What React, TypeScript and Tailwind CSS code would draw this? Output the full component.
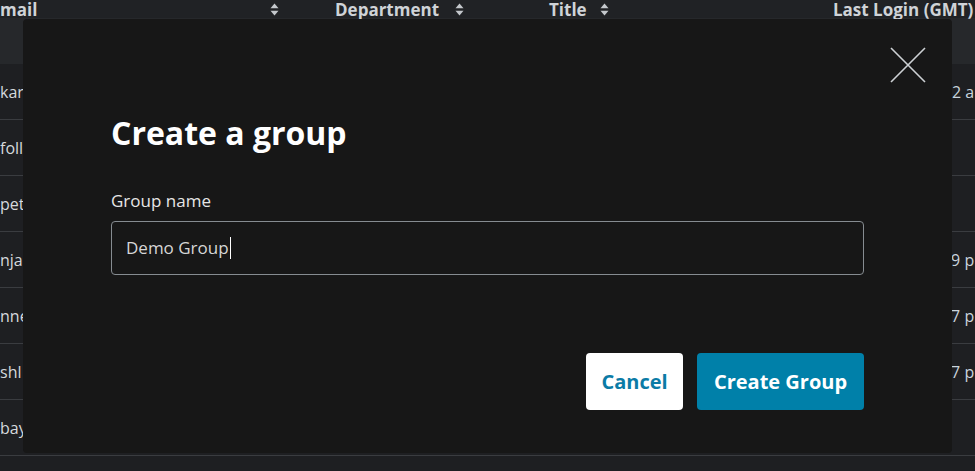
import React from "react";

const rows = [
  { left: "kar", right: "12 am" },
  { left: "foll", right: "" },
  { left: "pet", right: "" },
  { left: "nja", right: "9 pm" },
  { left: "nne", right: "7 pm" },
  { left: "shl", right: "7 pm" },
  { left: "bay", right: "" },
];

function SortIcon() {
  return (
    <svg width="9" height="13" viewBox="0 0 9 13" className="block shrink-0">
      <path d="M4.5 0.5 L8.5 5.2 H0.5 Z" fill="#c4c8cc" />
      <path d="M4.5 12.5 L8.5 7.8 H0.5 Z" fill="#c4c8cc" />
    </svg>
  );
}

function HeaderCell({ label, className }: { label: string; className: string }) {
  return (
    <div className={`flex shrink-0 items-start justify-between ${className}`}>
      <span>{label}</span>
      <span className="pt-[2px]">
        <SortIcon />
      </span>
    </div>
  );
}

function Table() {
  return (
    <div className="h-[471px] w-[975px] overflow-hidden bg-[#1e1f22] text-[#d5d9dd]">
      <div className="flex h-[18px] items-start whitespace-nowrap bg-[#202225] pt-[1px] text-[17px] font-bold leading-[17px] text-[#cfd3d7]">
        <HeaderCell label="mail" className="w-[279px]" />
        <HeaderCell label="Department" className="ml-[56px] w-[129px]" />
        <HeaderCell label="Title" className="ml-[85px] w-[60px]" />
        <span className="ml-[224px] shrink-0">Last Login (GMT)</span>
      </div>
      <div className="h-[46px] bg-[#26282b]" />
      {rows.map((r, i) => (
        <div
          key={i}
          className="flex h-[56px] items-center justify-between border-b border-[#3a3c40] bg-[#1e1f22] text-[16px]"
        >
          <span>{r.left}</span>
          <span className="mr-[-14px] text-[#c9d4dd]">{r.right}</span>
        </div>
      ))}
    </div>
  );
}

function Modal() {
  return (
    <div className="absolute left-[23px] top-[19px] h-[434px] w-[929px] rounded-[4px] bg-[#171717] px-[88px]">
      <button type="button" className="absolute right-[26px] top-[28px] h-[36px] w-[36px]">
        <svg width="36" height="36" viewBox="0 0 36 36">
          <path d="M1 1 L35 35 M35 1 L1 35" stroke="#cdd1d4" strokeWidth="1.6" />
        </svg>
      </button>
      <h2 className="pt-[96px] text-[32px] font-bold leading-[36px] text-white">Create a group</h2>
      <div className="mt-[38px] text-[17px] leading-[24px] text-[#e6e6e6]">Group name</div>
      <div className="mt-[8px] flex h-[54px] items-center rounded-[4px] border border-[#868c91] px-[14px] text-[17px] text-[#d6d6d6]">
        <span>Demo Group</span>
        <span className="ml-[1px] h-[22px] w-[1px] bg-white" />
      </div>
      <div className="mt-[78px] flex justify-end gap-[14px]">
        <button
          type="button"
          className="h-[57px] w-[97px] rounded-[4px] bg-white text-[20px] font-bold text-[#0b7ba6]"
        >
          Cancel
        </button>
        <button
          type="button"
          className="h-[57px] w-[167px] rounded-[4px] bg-[#0080a9] text-[20px] font-bold text-white"
        >
          Create Group
        </button>
      </div>
    </div>
  );
}

export default function App() {
  return (
    <div className="relative" style={{ fontFamily: '"Open Sans", "Noto Sans", sans-serif' }}>
      <Table />
      <Modal />
    </div>
  );
}
